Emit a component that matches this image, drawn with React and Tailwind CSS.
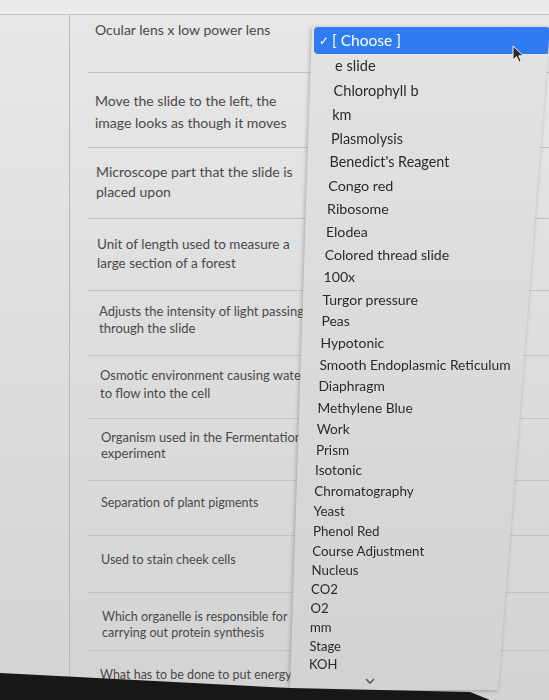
import { Fragment } from 'react';

const questions = [
  { lines: ['Ocular lens x low power lens'], row: 'h-[58px] pt-[4px] pl-[7px] text-[14px] leading-[22px]' },
  { lines: ['Move the slide to the left, the', 'image looks as though it moves'], row: 'h-[75px] pt-[17px] pl-[7px] text-[14px] leading-[22px]' },
  { lines: ['Microscope part that the slide is', 'placed upon'], row: 'h-[71px] pt-[14px] pl-[8px] text-[14px] leading-[20px]' },
  { lines: ['Unit of length used to measure a', 'large section of a forest'], row: 'h-[72px] pt-[16px] pl-[9px] text-[13.5px] leading-[19px]' },
  { lines: ['Adjusts the intensity of light passing', 'through the slide'], row: 'h-[65px] pt-[12px] pl-[11px] text-[13px] leading-[17px]' },
  { lines: ['Osmotic environment causing water', 'to flow into the cell'], row: 'h-[63px] pt-[10px] pl-[12px] text-[13px] leading-[18px]' },
  { lines: ['Organism used in the Fermentation', 'experiment'], row: 'h-[62px] pt-[10px] pl-[13px] text-[13px] leading-[16px]' },
  { lines: ['Separation of plant pigments'], row: 'h-[55px] pt-[14px] pl-[13px] text-[12.5px] leading-[16px]' },
  { lines: ['Used to stain cheek cells'], row: 'h-[57px] pt-[16px] pl-[13px] text-[12.5px] leading-[16px]' },
  { lines: ['Which organelle is responsible for', 'carrying out protein synthesis'], row: 'h-[58px] pt-[16px] pl-[14px] text-[12.5px] leading-[16px]' },
  { lines: ['What has to be done to put energy', 'back into a system'], row: 'h-[60px] pt-[16px] pl-[12px] text-[12.5px] leading-[16px]' },
];

const options = [
  'e slide',
  'Chlorophyll b',
  'km',
  'Plasmolysis',
  "Benedict's Reagent",
  'Congo red',
  'Ribosome',
  'Elodea',
  'Colored thread slide',
  '100x',
  'Turgor pressure',
  'Peas',
  'Hypotonic',
  'Smooth Endoplasmic Reticulum',
  'Diaphragm',
  'Methylene Blue',
  'Work',
  'Prism',
  'Isotonic',
  'Chromatography',
  'Yeast',
  'Phenol Red',
  'Course Adjustment',
  'Nucleus',
  'CO2',
  'O2',
  'mm',
  'Stage',
  'KOH',
];

function Cursor() {
  return (
    <svg width="13" height="19" viewBox="0 0 13 19" className="absolute left-[512px] top-[45px]">
      <path d="M1 1 L1 15 L4.5 11.6 L7 17.2 L9.2 16.2 L6.8 10.8 L11.4 10.8 Z" fill="#2a2a2a" stroke="#f4f4f4" strokeWidth="1" strokeLinejoin="round" />
    </svg>
  );
}

function Dropdown() {
  const last = options.length - 1;
  return (
    <div className="absolute left-[288px] top-[27px] drop-shadow-[-1px_1px_2px_rgba(0,0,0,0.25)]">
      <div className="h-[663px] w-[262px] bg-linear-to-b from-[#e3e3e2] to-[#d2d2d2] [clip-path:polygon(24px_0,100%_0,210px_100%,2px_100%)]">
        <div className="ml-[26px] flex h-[27px] items-center rounded-[4px] bg-[#2f7bf0] pl-[5px] text-[15.5px] text-white">
          <span className="w-[13px] text-[12px]">✓</span>
          <span>[ Choose ]</span>
        </div>
        {options.map((option, i) => {
          // perspective of the photo: rows get shorter and drift left further down
          const t = i / last;
          return (
            <div
              key={option}
              className="flex items-center whitespace-nowrap text-[#2b2b2b]"
              style={{
                height: 24.4 - 6 * t,
                fontSize: 14.6 - 1.6 * t,
                paddingLeft: 47 - 26 * t - 14 * t * (1 - t),
              }}
            >
              {option}
            </div>
          );
        })}
        <div className="ml-[77px] mt-[4px]">
          <svg width="10" height="7" viewBox="0 0 10 7">
            <path d="M1.5 1.5 L5 5 L8.5 1.5" fill="none" stroke="#5a5a5a" strokeWidth="1.6" strokeLinecap="round" />
          </svg>
        </div>
      </div>
    </div>
  );
}

export default function App() {
  return (
    <div className="relative h-[700px] w-[549px] overflow-hidden bg-linear-to-b from-[#e7e8e7] to-[#d3d3d3] font-['Lato','Liberation_Sans',sans-serif]">
      <div className="h-[15px] border-b border-[#c6c7c6] bg-[#ebebea]" />
      <div className="flex">
        <div className="h-[685px] w-[70px] shrink-0 border-r border-[#b8b8b8]" />
        <div className="flex-1 pl-[18px]">
          {questions.map((q) => (
            <div key={q.lines[0]} className={`border-b border-[#c4c4c4] text-[#4a4a4a] ${q.row}`}>
              {q.lines.map((line, i) => (
                <Fragment key={line}>
                  {i > 0 && <br />}
                  <span className="whitespace-nowrap">{line}</span>
                </Fragment>
              ))}
            </div>
          ))}
        </div>
      </div>
      <Dropdown />
      <Cursor />
      <div className="absolute bottom-0 left-0 h-[28px] w-[490px] bg-[#171717] [clip-path:polygon(0_1px,290px_16px,470px_20px,490px_28px,0_28px)]" />
    </div>
  );
}
